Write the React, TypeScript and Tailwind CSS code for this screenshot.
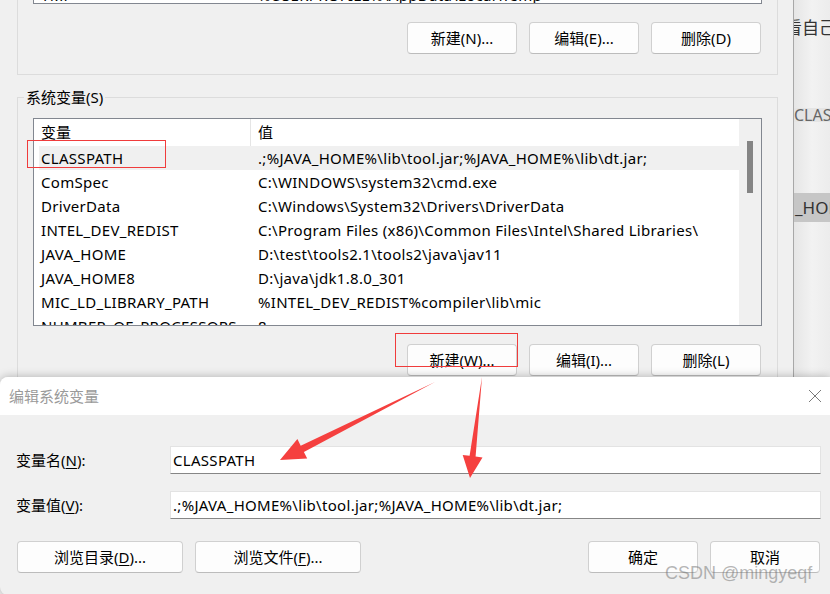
import React from 'react'

const rows: [string, string][] = [
  ['CLASSPATH', '.;%JAVA_HOME%\\lib\\tool.jar;%JAVA_HOME%\\lib\\dt.jar;'],
  ['ComSpec', 'C:\\WINDOWS\\system32\\cmd.exe'],
  ['DriverData', 'C:\\Windows\\System32\\Drivers\\DriverData'],
  ['INTEL_DEV_REDIST', 'C:\\Program Files (x86)\\Common Files\\Intel\\Shared Libraries\\'],
  ['JAVA_HOME', 'D:\\test\\tools2.1\\tools2\\java\\jav11'],
  ['JAVA_HOME8', 'D:\\java\\jdk1.8.0_301'],
  ['MIC_LD_LIBRARY_PATH', '%INTEL_DEV_REDIST%compiler\\lib\\mic'],
  ['NUMBER_OF_PROCESSORS', '8'],
]

const WinButton = ({ children, w = 'w-[110px]' }: { children: React.ReactNode; w?: string }) => (
  <button
    className={`${w} h-[32px] shrink-0 rounded-[4px] border border-[#d0d0d0] border-b-[#bcbcbc] bg-[#fdfdfd] text-[15px] leading-none text-black`}
  >
    {children}
  </button>
)

const Field = ({ label, mnemonic, value }: { label: string; mnemonic: string; value: string }) => (
  <div className="flex items-center">
    <div className="w-[170px] shrink-0 pl-[16px] text-[15px] text-black">
      {label}(<span className="underline underline-offset-2">{mnemonic}</span>):
    </div>
    <div className="flex h-[28px] w-[651px] items-center whitespace-nowrap border border-[#e3e3e3] border-b-[#868686] bg-white pl-[2px] text-[15px] tracking-[0.3px] text-black">
      {value}
    </div>
  </div>
)

export default function App() {
  return (
    <div className="relative flex h-[594px] w-[830px] overflow-hidden bg-[#f0f0f0] font-['Noto_Sans','Noto_Sans_CJK_SC',sans-serif] text-black">
      {/* environment variables window */}
      <div className="flex w-[793px] shrink-0 flex-col bg-[#f0f0f0]">
        {/* user variables group, scrolled off the top */}
        <div className="mx-[17px] h-[75px] w-[761px] shrink-0 border-x border-b border-[#dcdcdc]">
          <div className="ml-[15px] h-[4px] w-[729px] overflow-hidden border-x border-b border-[#828790] bg-white">
            <div className="-mt-[14px] flex whitespace-nowrap text-[15px] leading-[18px] tracking-[0.3px]">
              <span className="w-[217px] pl-[7px]">TMP</span>
              <span className="pl-[7px]">%USERPROFILE%\AppData\Local\Temp</span>
            </div>
          </div>
          <div className="mt-[18px] flex justify-end gap-[12px] pr-[16px]">
            <WinButton>新建(N)...</WinButton>
            <WinButton>编辑(E)...</WinButton>
            <WinButton>删除(D)</WinButton>
          </div>
        </div>

        {/* system variables group */}
        <fieldset className="mx-[17px] mt-[12px] h-[400px] w-[761px] shrink-0 border border-[#dcdcdc]">
          <legend className="ml-[6px] px-[2px] text-[15px] leading-[20px]">系统变量(S)</legend>
          <div className="ml-[15px] mt-[11px] flex h-[208px] w-[729px] border border-[#828790] bg-white">
            <div className="flex flex-1 flex-col overflow-hidden">
              <div className="flex h-[27px] shrink-0 items-center text-[15px]">
                <div className="flex h-full w-[217px] items-center border-r border-[#e5e5e5] pl-[7px]">变量</div>
                <div className="pl-[7px]">值</div>
              </div>
              {rows.map(([name, value], i) => (
                <div
                  key={name}
                  className={`ml-[5px] flex h-[24px] shrink-0 items-center whitespace-nowrap text-[15px] tracking-[0.3px] ${
                    i === 0 ? 'bg-[#f0f0f0]' : ''
                  }`}
                >
                  <div className="w-[212px] shrink-0 pl-[2px]">{name}</div>
                  <div className="pl-[7px]">{value}</div>
                </div>
              ))}
            </div>
            <div className="w-[22px] shrink-0 bg-[#f0f0f0] pl-[8px] pt-[22px]">
              <div className="h-[52px] w-[6px] bg-[#858585]" />
            </div>
          </div>
          <div className="mt-[18px] flex justify-end gap-[12px] pr-[16px]">
            <WinButton>新建(W)...</WinButton>
            <WinButton>编辑(I)...</WinButton>
            <WinButton>删除(L)</WinButton>
          </div>
        </fieldset>
      </div>

      {/* page behind, at the right */}
      <div className="flex flex-1 flex-col overflow-hidden border-l border-[#a8a8a8] bg-gradient-to-r from-[#e6e6e6] via-[#f2f2f2] to-[#ececec]">
        <div className="h-[40px] shrink-0 whitespace-nowrap pt-[17px] text-[17px] leading-[22px] text-[#333]">
          <span className="-ml-[9px] inline-block">看自己</span>
        </div>
        <div className="mt-[68px] h-[14px] shrink-0 whitespace-nowrap bg-[#e4e4e4] text-[16px] leading-[14px] text-[#666]">
          CLASS
        </div>
        <div className="mt-[71px] h-[29px] shrink-0 whitespace-nowrap bg-[#c6c6c6] pl-[1px] text-[17px] leading-[29px] text-[#333]">
          _HOME
        </div>
      </div>

      {/* edit system variable dialog */}
      <div className="absolute left-0 top-[377px] flex h-[218px] w-[830px] flex-col overflow-hidden rounded-l-[8px] bg-[#f0f0f0] shadow-[0_0_10px_rgba(0,0,0,0.28)]">
        <div className="flex h-[38px] shrink-0 items-center justify-between bg-white pl-[9px] pr-[8px]">
          <span className="text-[15px] text-[#9a9a9a]">编辑系统变量</span>
          <svg width="14" height="14" viewBox="0 0 14 14">
            <path d="M1 1L13 13M13 1L1 13" stroke="#7a7a7a" strokeWidth="1" />
          </svg>
        </div>
        <div className="mt-[31px]">
          <Field label="变量名" mnemonic="N" value="CLASSPATH" />
        </div>
        <div className="mt-[17px]">
          <Field label="变量值" mnemonic="V" value=".;%JAVA_HOME%\lib\tool.jar;%JAVA_HOME%\lib\dt.jar;" />
        </div>
        <div className="mt-[22px] flex gap-[12px] pl-[17px] pr-[10px]">
          <WinButton w="w-[166px]">
            浏览目录(<span className="underline underline-offset-2">D</span>)...
          </WinButton>
          <WinButton w="w-[166px]">
            浏览文件(<span className="underline underline-offset-2">F</span>)...
          </WinButton>
          <div className="ml-auto flex gap-[12px]">
            <WinButton>确定</WinButton>
            <WinButton>取消</WinButton>
          </div>
        </div>
      </div>

      {/* annotations */}
      <div className="absolute left-[27px] top-[140px] h-[28px] w-[139px] border border-[#f03c3c]" />
      <div className="absolute left-[395px] top-[333px] h-[34px] w-[123px] border border-[#f03c3c]" />
      <svg className="pointer-events-none absolute left-0 top-0" width="830" height="594" viewBox="0 0 830 594">
        <polygon
          points="435,382 303.9,451.9 307.2,458.6 280,460 297.4,439 300.7,445.7"
          fill="#f5403f"
        />
        <polygon
          points="482,377 475.6,456.6 482.5,457.4 470,478 462.7,455 469.6,455.8"
          fill="#f5403f"
        />
      </svg>
      <div className="pointer-events-none absolute left-[665px] top-[563px] font-['Liberation_Sans',sans-serif] text-[18px] leading-[20px] text-[rgba(110,110,110,0.5)]">
        CSDN @mingyeqf
      </div>
    </div>
  )
}
